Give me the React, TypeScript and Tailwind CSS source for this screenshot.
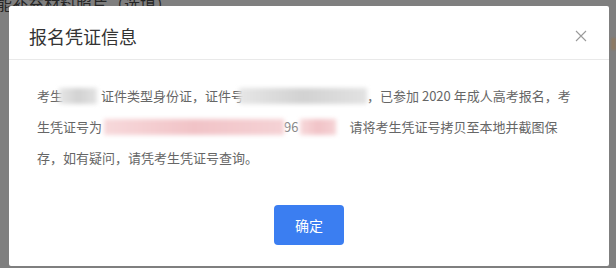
import React from "react";

const cjk = { fontFamily: '"Noto Sans CJK SC", "Noto Sans", sans-serif' };

function Blur({ w, tone = "gray", className = "" }: { w: number; tone?: "gray" | "pink"; className?: string }) {
  const bg =
    tone === "gray"
      ? "bg-gradient-to-r from-[#e6e6e6] via-[#d2d2d2] to-[#e2e2e2]"
      : "bg-gradient-to-r from-[#f7d9db] via-[#f1c3c7] to-[#f5d2d5]";
  return (
    <span
      className={`inline-block align-middle h-[16px] blur-[2px] ${bg} ${className}`}
      style={{ width: w }}
    />
  );
}

export default function App() {
  return (
    <div className="relative w-[616px] h-[268px] bg-[#7f7f7f] overflow-hidden" style={cjk}>
      {/* page behind the mask */}
      <div className="absolute top-[-9px] left-[-4px] text-[16px] text-[#262626] whitespace-nowrap">
        能补充材料照片（选填）
      </div>
      <div className="absolute top-[38px] right-0 w-[5px] h-[12px] bg-[#8d7a64] blur-[1px]" />

      <div className="pt-[6px] pl-[9px]">
        <div className="relative w-[600px] h-[260px] bg-white rounded-[2px] flex flex-col">
          {/* header */}
          <div className="h-[54px] flex items-center justify-between pl-[20px] pr-[22px] pt-[6px] border-b border-[#e9e9e9]">
            <h2 className="text-[18px] text-[#333] leading-none">报名凭证信息</h2>
            <button aria-label="close" className="w-[12px] h-[12px] flex items-center justify-center">
              <svg width="12" height="12" viewBox="0 0 12 12">
                <path d="M1 1L11 11M11 1L1 11" stroke="#9a9a9a" strokeWidth="1.1" fill="none" />
              </svg>
            </button>
          </div>

          {/* body */}
          <div className="pt-[20px] pl-[28px] text-[13px] leading-[31px] text-[#666] whitespace-nowrap">
            <div className="flex items-center">
              <span>考生</span>
              <Blur w={38} className="-ml-[4px]" />
              <span className="ml-[4px]">证件类型身份证，证件号</span>
              <Blur w={128} className="-ml-[5px]" />
              <span>，已参加 2020 年成人高考报名，考</span>
            </div>
            <div className="flex items-center">
              <span>生凭证号为</span>
              <Blur w={180} tone="pink" className="ml-[2px]" />
              <span className="text-[#888]">96</span>
              <Blur w={36} tone="pink" className="ml-[2px]" />
              <span className="ml-[13px]">请将考生凭证号拷贝至本地并截图保</span>
            </div>
            <div>存，如有疑问，请凭考生凭证号查询。</div>
          </div>

          {/* footer */}
          <div className="flex justify-center mt-[32px]">
            <button className="w-[70px] h-[40px] rounded-[4px] bg-[#3b7ef1] text-white text-[14px]">
              确定
            </button>
          </div>
        </div>
      </div>
    </div>
  );
}
